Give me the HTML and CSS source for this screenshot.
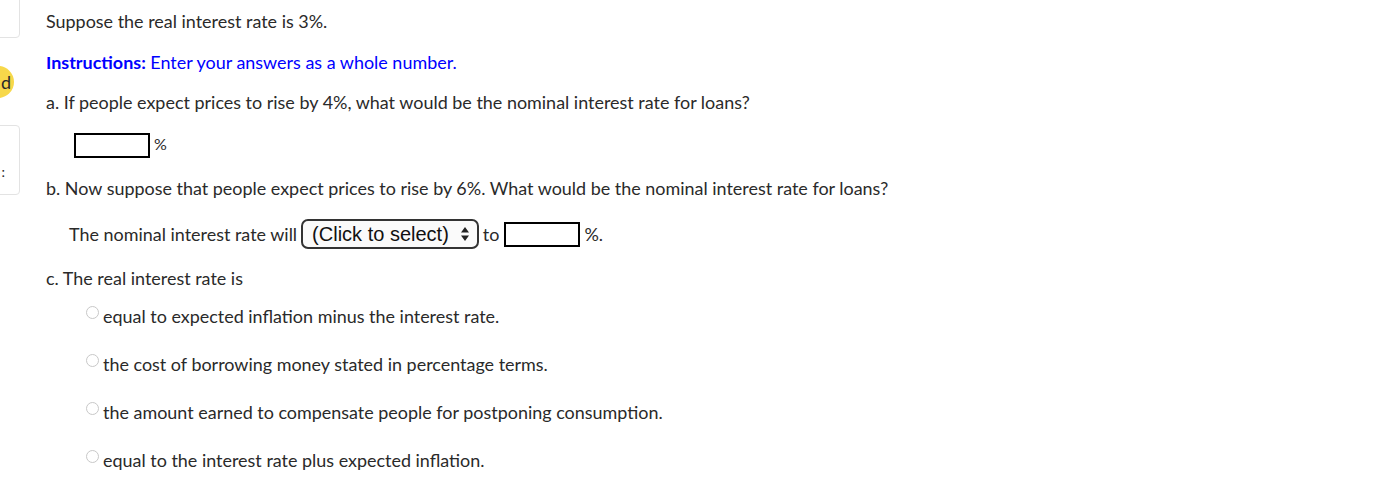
FILE: index.html
```html
<!DOCTYPE html>
<html lang="en">
<head>
    <meta charset="UTF-8">
    <title>Interest rate question</title>
    <link rel="stylesheet" href="styles.css">
</head>
<body>
    <div class="side">
        <div class="side-card top"></div>
        <div class="side-badge">d</div>
        <div class="side-card mid"><span>:</span></div>
    </div>

    <div class="question">
        <p class="line first">Suppose the real interest rate is 3%.</p>
        <p class="line instr"><b>Instructions:</b> Enter your answers as a whole number.</p>
        <p class="line">a. If people expect prices to rise by 4%, what would be the nominal interest rate for loans?</p>
        <div class="answer-a">
            <input type="text" class="box">
            <span>%</span>
        </div>
        <p class="line">b. Now suppose that people expect prices to rise by 6%. What would be the nominal interest rate for loans?</p>
        <div class="answer-b">
            <span>The nominal interest rate will</span>
            <div class="select">(Click to select)
                <svg class="arrows" width="8" height="14" viewBox="0 0 8 14"><path d="M4 0 L8 5.5 L0 5.5 Z M4 14 L8 8.5 L0 8.5 Z" fill="#222"/></svg>
            </div>
            <span>to</span>
            <input type="text" class="box">
            <span>%.</span>
        </div>
        <p class="line">c. The real interest rate is</p>
        <div class="options">
            <label class="opt"><span class="radio"></span>equal to expected inflation minus the interest rate.</label>
            <label class="opt"><span class="radio"></span>the cost of borrowing money stated in percentage terms.</label>
            <label class="opt"><span class="radio"></span>the amount earned to compensate people for postponing consumption.</label>
            <label class="opt"><span class="radio"></span>equal to the interest rate plus expected inflation.</label>
        </div>
    </div>
</body>
</html>
```

FILE: styles.css
```css
body {
    font-family: Lato, "Open Sans", sans-serif;
    font-size: 17.95px;
    color: #2a2a2a;
    background-color: white;
    margin: 0;
    padding: 0;
    position: relative;
}

.side {
    position: absolute;
    left: 0;
    top: 0;
    width: 20px;
}
.side-card {
    position: absolute;
    left: -20px;
    width: 38px;
    border: 1px solid #e3e3e3;
    border-radius: 4px;
    background: white;
}
.side-card.top {
    top: -10px;
    height: 46px;
}
.side-card.mid {
    top: 125px;
    height: 68px;
}
.side-card.mid span {
    position: absolute;
    right: 14px;
    top: 37px;
    font-size: 14px;
}
.side-badge {
    position: absolute;
    left: -18px;
    top: 66px;
    width: 32px;
    height: 32px;
    border-radius: 50%;
    background: #f7d84a;
    text-align: right;
    line-height: 32px;
    font-size: 18px;
    padding-right: 3px;
    box-sizing: border-box;
}

.question {
    padding: 10px 0 0 46px;
}
.line {
    margin: 0;
    line-height: 22px;
}
.instr {
    margin-top: 19px;
    color: #0000ff;
}
.instr + .line {
    margin-top: 18px;
}

.box {
    width: 76px;
    height: 25px;
    box-sizing: border-box;
    border: 2px solid #000;
    margin: 0;
    padding: 0 4px;
}

.answer-a {
    display: flex;
    align-items: flex-start;
    gap: 4px;
    margin: 20px 0 19px 28px;
}
.answer-a span {
    font-size: 16px;
    line-height: 22px;
}

.answer-b {
    display: flex;
    align-items: center;
    gap: 4px;
    margin: 20px 0 18px 23px;
}
.select {
    display: flex;
    align-items: center;
    gap: 12px;
    height: 30px;
    box-sizing: border-box;
    border: 2px solid #333;
    border-radius: 7px;
    padding: 0 8px 0 9px;
    font-family: "Liberation Sans", Arial, sans-serif;
    font-size: 20px;
    color: #111;
    background: #fafafa;
}
.answer-b .box {
    margin-left: 1px;
}

.options {
    margin: 16px 0 0 40px;
    display: flex;
    flex-direction: column;
    gap: 26px;
}
.opt {
    display: flex;
    align-items: flex-start;
    line-height: 22px;
}
.radio {
    width: 11px;
    height: 11px;
    border: 1px solid #c8c8c8;
    border-radius: 50%;
    margin: 1px 4px 0 0;
}
```
